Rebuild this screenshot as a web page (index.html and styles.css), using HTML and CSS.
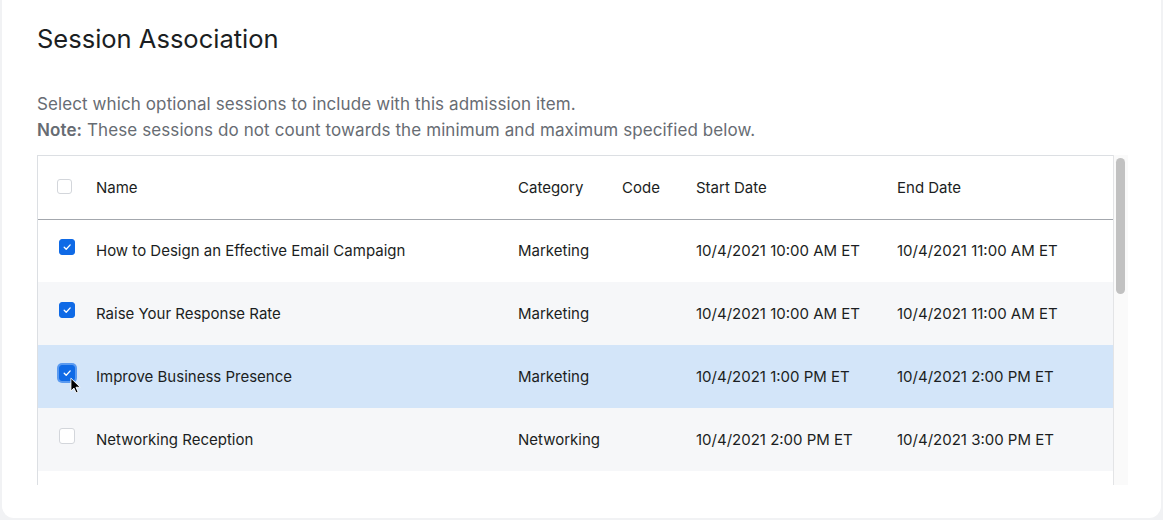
FILE: index.html
```html
<!DOCTYPE html>
<html lang="en">
<head>
<meta charset="utf-8">
<title>Session Association</title>
<link rel="stylesheet" href="styles.css">
</head>
<body>
<div class="card">
  <h1 class="title">Session Association</h1>
  <p class="intro">Select which optional sessions to include with this admission item.<br><strong>Note:</strong> These sessions do not count towards the minimum and maximum specified below.</p>
  <div class="scroller">
    <div class="table-wrap">
      <table class="sessions">
        <colgroup>
          <col class="c-cb"><col class="c-name"><col class="c-cat"><col class="c-code"><col class="c-start"><col class="c-end">
        </colgroup>
        <thead>
          <tr>
            <th class="cb"><span class="box"></span></th>
            <th>Name</th>
            <th>Category</th>
            <th>Code</th>
            <th>Start Date</th>
            <th>End Date</th>
          </tr>
        </thead>
        <tbody>
          <tr>
            <td class="cb"><span class="box checked"><svg viewBox="0 0 14 14"><path d="M4.2 7.3l2 2 4-4.4" fill="none" stroke="#fff" stroke-width="1.3" stroke-linecap="round" stroke-linejoin="round"/></svg></span></td>
            <td>How to Design an Effective Email Campaign</td>
            <td>Marketing</td>
            <td></td>
            <td>10/4/2021 10:00 AM ET</td>
            <td>10/4/2021 11:00 AM ET</td>
          </tr>
          <tr>
            <td class="cb"><span class="box checked"><svg viewBox="0 0 14 14"><path d="M4.2 7.3l2 2 4-4.4" fill="none" stroke="#fff" stroke-width="1.3" stroke-linecap="round" stroke-linejoin="round"/></svg></span></td>
            <td>Raise Your Response Rate</td>
            <td>Marketing</td>
            <td></td>
            <td>10/4/2021 10:00 AM ET</td>
            <td>10/4/2021 11:00 AM ET</td>
          </tr>
          <tr class="active">
            <td class="cb"><span class="box checked focus"><svg viewBox="0 0 14 14"><path d="M4.2 7.3l2 2 4-4.4" fill="none" stroke="#fff" stroke-width="1.3" stroke-linecap="round" stroke-linejoin="round"/></svg></span><svg class="cursor" viewBox="0 0 12 18"><path d="M1 1v14l3.3-3.2 2.3 5.2 2.2-1-2.3-5.1h4.6z" fill="#000" stroke="#fff" stroke-width="1" stroke-linejoin="round"/></svg></td>
            <td>Improve Business Presence</td>
            <td>Marketing</td>
            <td></td>
            <td>10/4/2021 1:00 PM ET</td>
            <td>10/4/2021 2:00 PM ET</td>
          </tr>
          <tr>
            <td class="cb"><span class="box"></span></td>
            <td>Networking Reception</td>
            <td>Networking</td>
            <td></td>
            <td>10/4/2021 2:00 PM ET</td>
            <td>10/4/2021 3:00 PM ET</td>
          </tr>
        </tbody>
      </table>
    </div>
    <div class="track"><div class="thumb"></div></div>
  </div>
</div>
</body>
</html>
```
FILE: styles.css
```css
* { box-sizing: border-box; }
html, body { margin: 0; padding: 0; }
body {
  background: #f1f2f4;
  font-family: Inter, "Liberation Sans", sans-serif;
  color: #1b1e22;
  height: 520px;
  overflow: hidden;
}
.card {
  margin: 0 2px;
  height: 518px;
  background: #fff;
  border-radius: 0 0 12px 12px;
  padding: 23px 0 0 35px;
}
.title {
  margin: 0;
  font-size: 25.5px;
  line-height: 32px;
  font-weight: 400;
  color: #1b1e22;
}
.intro {
  margin: 36px 0 12px;
  font-size: 17px;
  line-height: 26px;
  letter-spacing: 0.1px;
  color: #676c73;
}
.intro strong { font-weight: 600; }
.scroller {
  display: flex;
  height: 330px;
}
.table-wrap {
  width: 1076px;
  height: 330px;
  overflow: hidden;
  border-top: 1px solid #dcdfe3;
  border-left: 1px solid #dcdfe3;
}
.track {
  width: 15px;
  height: 330px;
  background: #fafafa;
  border-left: 1px solid #e3e4e6;
  padding: 3px 4px 0 2px;
}
.thumb {
  width: 9px;
  height: 136px;
  border-radius: 5px;
  background: #c1c1c1;
}
.sessions {
  width: 1075px;
  table-layout: fixed;
  border-collapse: collapse;
  font-size: 15px;
}
.c-cb { width: 58px; }
.c-name { width: 422px; }
.c-cat { width: 104px; }
.c-code { width: 74px; }
.c-start { width: 201px; }
.c-end { width: 216px; }
.sessions th, .sessions td {
  padding: 0;
  text-align: left;
  font-weight: 400;
  white-space: nowrap;
  vertical-align: middle;
}
.sessions thead tr { height: 63px; }
.sessions thead th { border-bottom: 1px solid #a3a7ad; }
.sessions tbody tr { height: 63px; }
.sessions tbody tr:nth-child(even) { background: #f6f7f9; }
.sessions tbody tr.active { background: #d3e5f9; }
.sessions .cb { padding-left: 21px; position: relative; }
.sessions th.cb { padding-left: 19px; }
.box {
  display: block;
  width: 16px;
  height: 16px;
  border: 1px solid #d3d6db;
  border-radius: 3px;
  background: #fff;
  transform: translateY(-4px);
}
th .box { width: 15px; height: 15px; transform: translateY(-1px); }
.box.checked {
  background: #0f6ae6;
  border-color: #0f6ae6;
}
.box.focus { box-shadow: 0 0 0 2px #5a9af0; }
.box svg { display: block; width: 14px; height: 14px; }
.cursor {
  position: absolute;
  left: 32px;
  top: 32px;
  width: 11px;
  height: 17px;
}
```
